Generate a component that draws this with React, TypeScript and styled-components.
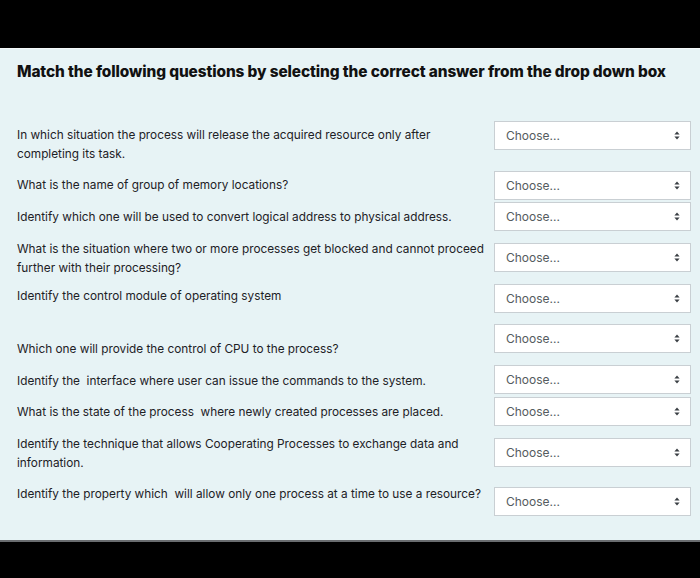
import React from "react";
import styled, { createGlobalStyle } from "styled-components";

const Global = createGlobalStyle`
  html, body { margin: 0; padding: 0; background: #000; }
  * { box-sizing: border-box; }
`;

const Page = styled.div`
  width: 700px;
  height: 578px;
  display: flex;
  flex-direction: column;
  background: #000;
  font-family: Inter, "Noto Sans", sans-serif;
`;

const TopBar = styled.div`
  height: 49px;
  background: #000;
  border-bottom: 1px solid #f4f9fa;
`;

const Panel = styled.div`
  flex: 1;
  background: #e7f3f5;
  padding: 13px 0 0 0;
  display: flex;
  flex-direction: column;
`;

const BottomBar = styled.div`
  height: 38px;
  background: #000;
  border-top: 2px solid #6a6d70;
`;

const Title = styled.h1`
  margin: 0 0 39px 17px;
  font-size: 15.4px;
  line-height: 20px;
  font-weight: 800;
  color: #111;
  letter-spacing: -0.1px;
`;

const Row = styled.div<{ $h: number }>`
  height: ${(p) => p.$h}px;
  display: flex;
  align-items: flex-start;
  padding-left: 17px;
`;

const Question = styled.div<{ $top: number }>`
  width: 477px;
  padding-top: ${(p) => p.$top}px;
  padding-right: 4px;
  font-size: 11.8px;
  line-height: 19px;
  color: #1d2125;
`;

const SelectBox = styled.div<{ $top: number }>`
  margin-top: ${(p) => p.$top}px;
  width: 197px;
  height: 29px;
  background: #fff;
  border: 1px solid #c9cfd3;
  display: flex;
  align-items: center;
  justify-content: space-between;
  padding: 0 10px 0 11px;
  font-size: 12px;
  color: #555b60;
`;

const Arrows = () => (
  <svg width="6" height="9" viewBox="0 0 6 9">
    <path d="M3 0.5 L5.6 3.6 H0.4 Z" fill="#3a3f44" />
    <path d="M3 8.5 L5.6 5.4 H0.4 Z" fill="#3a3f44" />
  </svg>
);

const rows: { q: React.ReactNode; h: number; t: number; s: number }[] = [
  {
    q: (
      <>
        In which situation the process will release the acquired resource only after
        <br />
        completing its task.
      </>
    ),
    h: 50,
    t: 4.5,
    s: 0,
  },
  { q: "What is the name of group of memory locations?", h: 31, t: 4.5, s: 0 },
  {
    q: "Identify which one will be used to convert logical address to physical address.",
    h: 37.5,
    t: 5.5,
    s: 0,
  },
  {
    q: "What is the situation where two or more processes get blocked and cannot proceed further with their processing?",
    h: 44.5,
    t: 0,
    s: 3.5,
  },
  { q: "Identify the control module of operating system", h: 40, t: 2.5, s: 0 },
  { q: "Which one will provide the control of CPU to the process?", h: 41, t: 15.5, s: 0 },
  {
    q: "Identify the \u00a0interface where user can issue the commands to the system.",
    h: 32,
    t: 6.5,
    s: 0,
  },
  {
    q: "What is the state of the process \u00a0where newly created processes are placed.",
    h: 37.5,
    t: 5.5,
    s: 0,
  },
  {
    q: (
      <>
        Identify the technique that allows Cooperating Processes to exchange data and
        <br />
        information.
      </>
    ),
    h: 50,
    t: 0,
    s: 3.5,
  },
  {
    q: "Identify the property which \u00a0will allow only one process at a time to use a resource?",
    h: 40,
    t: 0,
    s: 2.5,
  },
];

export default function App() {
  return (
    <>
      <Global />
      <Page>
        <TopBar />
        <Panel>
          <Title>Match the following questions by selecting the correct answer from the drop down box</Title>
          {rows.map((r, i) => (
            <Row key={i} $h={r.h}>
              <Question $top={r.t}>{r.q}</Question>
              <SelectBox $top={r.s}>
                <span>Choose...</span>
                <Arrows />
              </SelectBox>
            </Row>
          ))}
        </Panel>
        <BottomBar />
      </Page>
    </>
  );
}
